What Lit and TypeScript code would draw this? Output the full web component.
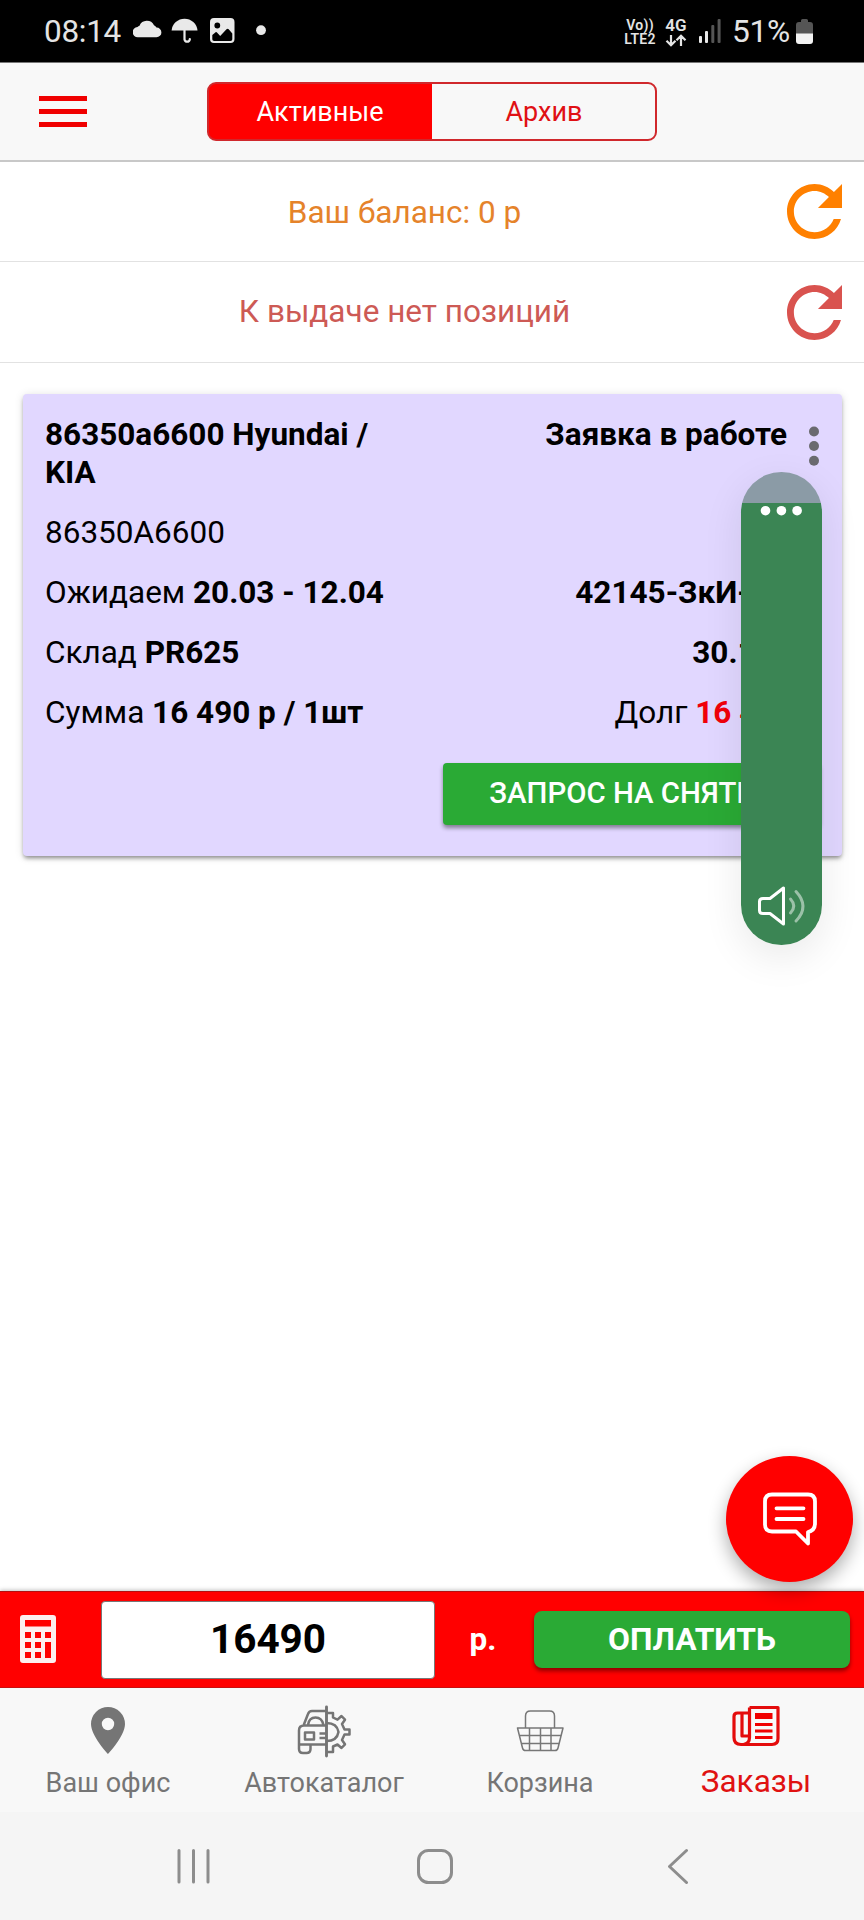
import { LitElement, html, css, svg } from "lit";
import { customElement } from "lit/decorators.js";

const refreshPath =
  "M256 388c-72.597 0-132-59.405-132-132 0-72.601 59.403-132 132-132 36.3 0 69.299 15.4 92.406 39.601L278 234h154V80l-51.698 51.702C348.406 99.798 304.406 80 256 80c-96.797 0-176 79.203-176 176s78.094 176 176 176c81.045 0 148.287-54.134 169.401-128H378.85c-18.745 49.561-67.138 84-122.85 84z";

@customElement("status-bar")
class StatusBar extends LitElement {
  static styles = css`
    :host { display: flex; height: 63px; margin-bottom: -1px; box-sizing: border-box; background: #000; color: #e4e4e4; padding: 0 51px 0 44px; justify-content: space-between; align-items: center; border-bottom: 1px solid #777; }
    .group { display: flex; align-items: center; height: 62px; }
    .time { font-size: 31.500px; line-height: 62px; letter-spacing: -0.300px; margin-right: 11px; width: 78px; white-space: nowrap; padding-top: 1px; }
    .lte { width: 32px; font-size: 14px; letter-spacing: 0.300px; line-height: 14px; font-weight: 600; display: flex; flex-direction: column; align-items: center; margin-right: 8px; white-space: nowrap; padding-top: 2px; }
    .net { width: 24px; display: flex; flex-direction: column; align-items: center; font-size: 17px; line-height: 15px; font-weight: 600; margin-right: 11px; padding-top: 2px; }
    .net svg { margin-top: 1px; }
    .pct { font-size: 31.700px; line-height: 62px; letter-spacing: -0.300px; margin-left: 11px; width: 64px; white-space: nowrap; padding-top: 1px; }
    svg { display: block; flex: none; }
  `;
  render() {
    return html`
      <div class="group">
        <span class="time">08:14</span>
        <svg width="134" height="30" viewBox="133 17 134 30" fill="#e9e9e9">
          <path d="M138 38.300a5 5 0 0 1-.5-10.200 5 5 0 0 1 2-1.300 8 8 0 0 1 14.500-.600 5.500 5.500 0 0 1 2.500 2.300 4.800 4.800 0 0 1 0 9.800z" />
          <path d="M171.600 31.500a13 13 0 0 1 25.900 0z" />
          <path d="M184.500 30v10.500a2.700 2.700 0 0 0 5.300 0v-.500" fill="none" stroke="#e9e9e9" stroke-width="2.200" stroke-linecap="round" />
          <path fill-rule="evenodd" d="M214 19h16.500a4 4 0 0 1 4 4v17a4 4 0 0 1-4 4H214a4 4 0 0 1-4-4V23a4 4 0 0 1 4-4zm3.300 4.600a2.900 2.900 0 1 0 0 5.800 2.900 2.900 0 0 0 0-5.800zM212.300 36v4.200a1.800 1.800 0 0 0 1.800 1.800h16.400a1.800 1.800 0 0 0 1.800-1.800V34.500l-3.600-4.200a1.500 1.500 0 0 0-2.200 0l-6.300 6.600-3-3.200a1.500 1.500 0 0 0-2.200 0z" />
          <circle cx="261" cy="31.200" r="4.900" />
        </svg>
      </div>
      <div class="group">
        <div class="lte"><span>Vo))</span><span>LTE2</span></div>
        <div class="net">
          4G
          <svg width="22" height="13" viewBox="0 0 22 13" fill="none" stroke="#e4e4e4" stroke-width="2.200"><path d="M6 1v10M1.500 6.800L6 11.300l4.500-4.500M16 12V2M11.500 6.200L16 1.700l4.500 4.500" /></svg>
        </div>
        <svg width="22" height="24" viewBox="0 0 22 24"><rect x="0" y="17" width="3" height="7" rx="1" fill="#e9e9e9" /><rect x="6" y="12" width="3" height="12" rx="1" fill="#e9e9e9" /><rect x="12.300" y="6" width="3" height="18" rx="1" fill="#555" /><rect x="18.600" y="0" width="3" height="24" rx="1" fill="#555" /></svg>
        <span class="pct">51%</span>
        <svg width="17" height="25" viewBox="0 0 17 25"><path d="M0 15V6a3 3 0 0 1 3-3h2V1.500A1.500 1.500 0 0 1 6.500 0h4A1.500 1.500 0 0 1 12 1.500V3h2a3 3 0 0 1 3 3v9z" fill="#555" /><path d="M0 14.500h17V22a3 3 0 0 1-3 3H3a3 3 0 0 1-3-3z" fill="#f2f2f2" /></svg>
      </div>
    `;
  }
}

@customElement("order-card")
class OrderCard extends LitElement {
  static styles = css`
    :host { display: flex; flex-direction: column; box-sizing: border-box; height: 462px; background: #e1d7ff; border-radius: 4px; padding: 22px 22px 0 22.500px; box-shadow: 0 3px 4px -1px rgba(0,0,0,.42), 0 1px 10px rgba(0,0,0,.12); font-size: 31.500px; line-height: 37.500px; color: #000; }
    .row { display: flex; justify-content: space-between; padding-bottom: 22.500px; white-space: nowrap; }
    .row.meta { padding-right: 1px; }
    .title { white-space: normal; width: 345px; font-weight: 700; }
    .status { display: flex; font-weight: 700; }
    .more { margin: 10px 1px 0 22px; width: 10px; height: 40px; display: block; }
    b { font-weight: 700; }
    .number { margin-right: -2px; }
    .debt { color: #f0000a; }
    .request { align-self: flex-end; margin-top: 9px; width: 377px; height: 62px; border: 0; border-radius: 4px; background: #2aaa35; color: #fff; font: 500 29.400px/59px Roboto, sans-serif; padding: 0; box-shadow: 0 3px 4px rgba(0,0,0,.42); white-space: nowrap; }
  `;
  render() {
    return html`
      <div class="row">
        <span class="title">86350a6600 Hyundai / KIA</span>
        <span class="status">Заявка в работе
          <svg class="more" viewBox="0 0 10 40" fill="#6a6a6f"><circle cx="5" cy="5.500" r="5" /><circle cx="5" cy="20" r="5" /><circle cx="5" cy="34.800" r="5" /></svg>
        </span>
      </div>
      <div class="row"><span>86350A6600</span></div>
      <div class="row"><span>Ожидаем <b>20.03 - 12.04</b></span><b class="number">42145-ЗкИ-1220</b></div>
      <div class="row meta"><span>Склад <b>PR625</b></span><b>30.12.22</b></div>
      <div class="row meta"><span>Сумма <b>16 490 р / 1шт</b></span><span>Долг <b class="debt">16 490 р</b></span></div>
      <button class="request">ЗАПРОС НА СНЯТИЕ</button>
    `;
  }
}

const tabIcons = {
  office: svg`<path fill="#757575" fill-rule="evenodd" d="M108 1707a17 17 0 0 1 17 17c0 12-17 30-17 30s-17-18-17-30a17 17 0 0 1 17-17zm0 10.800a6.200 6.200 0 1 0 0 12.400 6.200 6.200 0 0 0 0-12.400z"/>`,
  catalog: svg`<g fill="none" stroke="#757575" stroke-width="2.500" stroke-linejoin="round">
    <path stroke-width="2.900" stroke-linecap="round" d="M326.500 1707v49"/>
    <path d="M326 1711h-14q-3 0-4 3l-4.500 11.500M299 1745v-14.500q0-5 5-5h22.500M299 1744.500h27.500M299 1744v5q0 4 4 4h3.500q4 0 4-4v-4.500M308 1725q1-7.500 7.500-7.500t8 7.500"/>
    <path d="M305 1732.500h9v7h-9zM319.500 1733.500h7M319.500 1738h7"/>
    <path d="M326.500 1723q10.500 0 12 9-1.500 9-12 9"/>
    <path d="M327 1713h6v4.500l4.500 2.200 4-3.700 3.500 3.700-3 4.300 2.500 5.500h5v5h-5l-2.500 5.500 3 4.300-3.500 3.700-4-3.500-4.500 2v5.500h-6"/></g>`,
  cart: svg`<g fill="none" stroke="#777" stroke-width="1.500" stroke-linejoin="round">
    <path d="M525.500 1728v-12q0-5 5-5h19q5 0 5 5v12M517.500 1728h45.500l-5 20q-.500 2.500-3 2.500h-29.500q-2.500 0-3-2.500zM519 1735.500h42.500M521 1743.500h38.500M529.500 1728v22M540.500 1728v22M551 1728v22"/></g>`,
  orders: svg`<g fill="none" stroke="#e40c0c" stroke-width="3.200" stroke-linejoin="round">
    <path d="M749.500 1707.500h28.500v31q0 6-6 6h-31q-7 0-7-7v-21q0-3.500 3.500-3.500h12M749.500 1707.500v30q0 6-6 7M742 1714v22h7"/>
    </g><path fill="#f00000" d="M755 1713h17.500v6H755zm0 10h17.500v3H755zm0 6.500h17.500v3H755zm0 6.500h17.500v3H755z"/>`,
};

@customElement("app-root")
class AppRoot extends LitElement {
  static styles = css`
    :host { display: flex; flex-direction: column; position: relative; width: 864px; height: 1920px; overflow: hidden; background: #fff; font-family: Roboto, sans-serif; }
    svg { display: block; flex: none; }
    .header { display: flex; height: 100px; box-sizing: border-box; background: #f8f8f8; border-bottom: 2px solid #c8c8c8; border-top: 1px solid #777; padding: 19px 0 0 39px; }
    .burger { margin: 14px 120px 0 0; }
    .segment { display: flex; width: 450px; height: 59px; box-sizing: border-box; border: 2px solid #d0282c; border-radius: 9px; overflow: hidden; font-size: 27px; line-height: 57px; text-align: center; color: #e01014; background: linear-gradient(90deg, #f00 50%, #f8f8f8 50%) border-box; }
    .segment span { flex: 1; }
    .segment .on { color: #fff; padding-right: 2px; }
    .info { display: flex; box-sizing: border-box; height: 100px; border-bottom: 1px solid #e2e2e2; padding: 0 22px; align-items: center; font-size: 31.500px; text-align: center; }
    .info span { flex: 1; }
    .balance { color: #e5832a; }
    .balance span { padding-top: 2px; }
    .pickup { color: #cd5a55; height: 101px; }
    .pickup span { padding-bottom: 2px; }
    .info svg { margin-top: -1px; }
    .pickup svg { margin-top: 0; }
    order-card { margin: 31px 22px 0 22.500px; }
    .grow { flex: 1; }
    .pay { display: flex; box-sizing: border-box; height: 97px; background: #f00; border-top: 1px solid #b41010; border-bottom: 1px solid #c81010; box-shadow: 0 -1px 4px rgba(0,0,0,.25); align-items: center; padding: 0 14px 0 20px; color: #fff; font-weight: 700; }
    .calc { margin-top: -2px; }
    .amount { margin-left: 45px; width: 334px; height: 78px; box-sizing: border-box; background: #fff; border: 1px solid #777; border-radius: 4px; text-align: center; font: 700 40.500px/74px Roboto, sans-serif; color: #000; padding: 0 0 2px; }
    .cur { width: 96px; padding-right: 3px; text-align: center; font-size: 31.500px; }
    .paybtn { width: 316px; height: 57px; border: 0; border-radius: 8px; background: #2aaa35; color: #fff; font: 700 31.800px/54px Roboto, sans-serif; padding: 0 0 2px; box-shadow: 0 3px 4px rgba(0,0,0,.45); }
    .tabs { display: grid; grid-template-columns: repeat(4, 216px); height: 124px; background: #f8f8f8; color: #757575; font-size: 27px; text-align: center; }
    .tabs svg { margin: 0 auto; }
    .tabs div { padding-top: 15px; }
    .label { display: block; line-height: 36px; margin-top: 7px; }
    .tabs .active { color: #e01212; font-size: 31.500px; }
    .active .label { margin-top: 6px; }
    .nav { display: flex; height: 108px; background: #f5f5f5; }
    .volume { position: absolute; left: 741px; top: 472px; width: 80.500px; height: 473px; border-radius: 40.250px; overflow: hidden; background: linear-gradient(#8b9ba6 31px, #3b8554 31px); }
    .halo { position: absolute; left: 741px; top: 472px; width: 80.500px; height: 473px; border-radius: 40.250px; box-shadow: 0 12px 40px rgba(0,0,0,.09); }
    .fab { position: absolute; left: 726px; top: 1456px; width: 127px; height: 126px; border-radius: 50%; background: #f00; box-shadow: 0 8px 18px rgba(0,0,0,.32); }
  `;
  tab(name: keyof typeof tabIcons, label: string, x: number, active = false) {
    return html`<div class=${active ? "active" : ""}>
      <svg width="70" height="55" viewBox="${x - 35} 1703 70 55">${tabIcons[name]}</svg>
      <span class="label">${label}</span>
    </div>`;
  }
  refresh(color: string) {
    return html`<svg width="55" height="55" viewBox="80 80 352 352" fill=${color}><path d=${refreshPath} /></svg>`;
  }
  render() {
    return html`
      <status-bar></status-bar>
      <div class="header">
        <svg class="burger" width="48" height="32" viewBox="0 0 48 32" fill="#f00000"><path d="M0 0h48v5H0zM0 13h48v5H0zM0 26h48v5H0z" /></svg>
        <div class="segment"><span class="on">Активные</span><span>Архив</span></div>
      </div>
      <div class="info balance"><span>Ваш баланс: 0 р</span>${this.refresh("#ff8000")}</div>
      <div class="info pickup"><span>К выдаче нет позиций</span>${this.refresh("#d9534f")}</div>
      <order-card></order-card>
      <div class="grow"></div>
      <div class="pay">
        <svg class="calc" width="36" height="48" viewBox="0 0 36 48"><path fill="#fdeeee" fill-rule="evenodd" d="M3 0h30a3 3 0 0 1 3 3v42a3 3 0 0 1-3 3H3a3 3 0 0 1-3-3V3a3 3 0 0 1 3-3zm2 5v6.500h26V5zm0 12v6h6v-6zm10 0v6h6v-6zm10 0v6h6v-6zM5 27v6h6v-6zm10 0v6h6v-6zm10 0v16h6V27zM5 37v6h6v-6zm10 0v6h6v-6z" /></svg>
        <input class="amount" value="16490" />
        <span class="cur">р.</span>
        <button class="paybtn">ОПЛАТИТЬ</button>
      </div>
      <div class="tabs">
        ${this.tab("office", "Ваш офис", 108)} ${this.tab("catalog", "Автокаталог", 324)}
        ${this.tab("cart", "Корзина", 540)} ${this.tab("orders", "Заказы", 756, true)}
      </div>
      <div class="nav">
        <svg width="864" height="108" viewBox="0 1812 864 108" fill="none" stroke="#8d8d8d" stroke-width="3" stroke-linecap="round" stroke-linejoin="round">
          <path d="M179 1850.500v31.500M193.500 1850.500v31.500M208 1850.500v31.500M686.500 1850.500l-17 16 17 16" />
          <rect x="418.500" y="1850.500" width="33" height="32" rx="10" />
        </svg>
      </div>
      <div class="halo"></div>
      <div class="volume">
        <svg width="81" height="473" viewBox="741 472 81 473" fill="none" stroke="#fff" stroke-width="3" stroke-linejoin="round" stroke-linecap="round">
          <g fill="#fff" stroke="none"><circle cx="765.500" cy="510.700" r="4.800" /><circle cx="781.400" cy="510.700" r="4.800" /><circle cx="797.100" cy="510.700" r="4.800" /></g>
          <path d="M763 898.500h7l13.500-10.500v36l-13.500-10.500h-7q-3.500 0-3.500-3v-9q0-3 3.500-3z" />
          <path stroke="#9bc1a8" d="M790.500 899q6.500 7 0 14M796 891.500q14 15 0 29.500" />
        </svg>
      </div>
      <div class="fab">
        <svg width="127" height="126" viewBox="726 1456 127 126" fill="none" stroke="#fff" stroke-width="3.800" stroke-linejoin="round" stroke-linecap="round">
          <path d="M772 1494.500h36q7 0 7 7v22q0 7-7 8.500v11.500l-12-12h-24q-7 0-7-7v-23q0-7 7-7zM776.500 1508.300h27M776.500 1519h27" />
        </svg>
      </div>
    `;
  }
}
